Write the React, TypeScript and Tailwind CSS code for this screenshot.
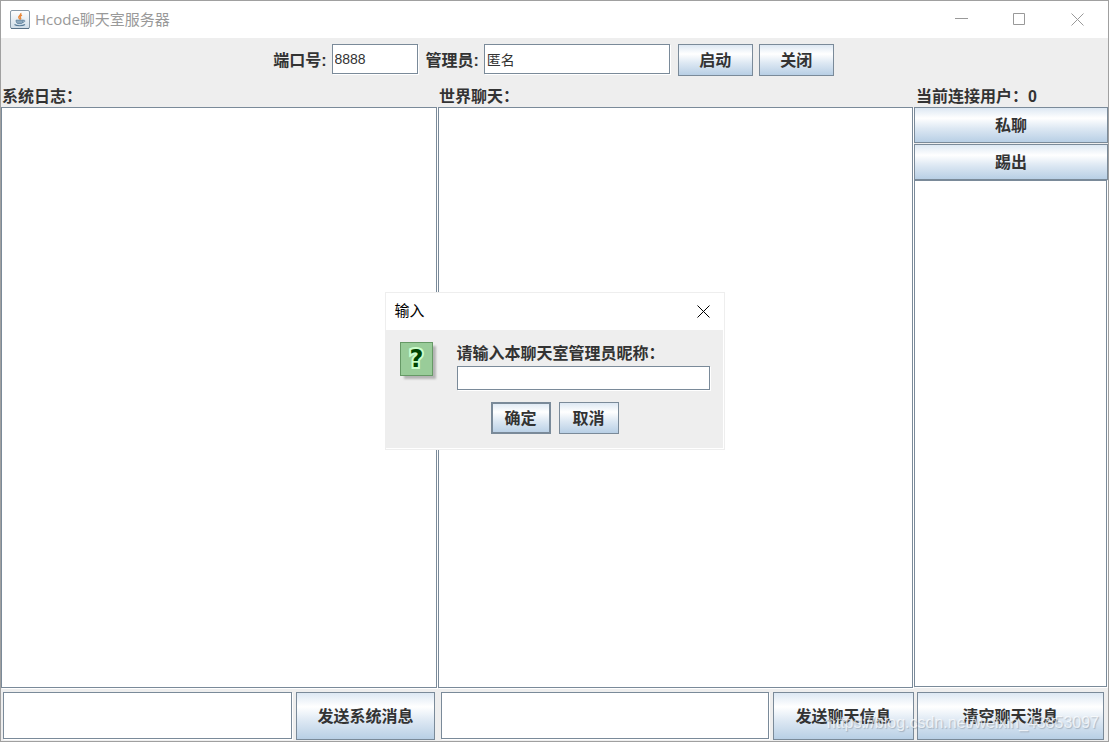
import { useState } from "react"
import type { ButtonHTMLAttributes, InputHTMLAttributes } from "react"
import { clsx } from "clsx"

const fieldStyles =
  "border border-[#7a8a99] bg-white px-0.5 text-sm text-[#333] shadow-[1px_1px_0_#fff] outline-none"

const MetalButton = ({ className, type = "button", ...props }: ButtonHTMLAttributes<HTMLButtonElement>) => (
  <button
    type={type}
    className={clsx(
      "border border-[#7a8a99] bg-[linear-gradient(to_bottom,#dde8f3_0%,#ffffff_30%,#dde8f3_60%,#b8cfe5_100%)] pt-0.5 font-bold whitespace-nowrap",
      className
    )}
    {...props}
  />
)

const MetalInput = ({ className, ...props }: InputHTMLAttributes<HTMLInputElement>) => (
  <input className={clsx(fieldStyles, className)} {...props} />
)

const JavaIcon = () => (
  <svg viewBox="0 0 20 20" className="size-5" aria-hidden="true">
    <defs>
      <linearGradient id="java-bg" x1="0" y1="0" x2="0" y2="1">
        <stop offset="0" stopColor="#ffffff" />
        <stop offset="1" stopColor="#cfdde8" />
      </linearGradient>
    </defs>
    <rect x="0.5" y="0.5" width="19" height="18" rx="1.5" fill="url(#java-bg)" stroke="#8799a8" />
    <path d="M1 18.5h18" stroke="#587187" strokeWidth="1" />
    <path
      d="M10.8 3c1 2-3.2 2.9-2 4.8.4.7 1 1 .9 1.7M12 5.2c-2 1-2.2 1.8-1.4 2.7.4.6.1 1.2-.5 1.6"
      fill="none"
      stroke="#e8883a"
      strokeWidth="1.3"
    />
    <path d="M6 10.2h7.2c-.1 2-.8 3.2-1.6 3.4H7.8C6.7 13.2 6.1 12 6 10.2z" fill="#8da8bd" stroke="#587c98" strokeWidth="0.8" />
    <path d="M13.2 10.3c2.4-.5 2.3 1.9-.8 2.1" fill="none" stroke="#587c98" strokeWidth="0.9" />
    <path d="M4.5 14.6c2 1.5 8.3 1.5 10.5 0" fill="none" stroke="#587c98" strokeWidth="1.2" />
  </svg>
)

const QuestionIcon = () => (
  <svg viewBox="0 0 40 40" className="size-10" aria-hidden="true">
    <defs>
      <filter id="soft" x="-20%" y="-20%" width="140%" height="140%">
        <feGaussianBlur stdDeviation="1.2" />
      </filter>
    </defs>
    <rect x="4" y="4" width="32" height="33" fill="#b4b4b4" filter="url(#soft)" />
    <rect x="0.5" y="0.5" width="32" height="33" fill="#99cc99" stroke="#669966" />
    <text
      x="16.5"
      y="25"
      textAnchor="middle"
      fill="#004400"
      stroke="#ccffcc"
      strokeWidth="4"
      paintOrder="stroke"
      className="font-['DejaVu_Sans',sans-serif] text-[24px] font-bold"
    >
      ?
    </text>
  </svg>
)

const CloseIcon = () => (
  <svg viewBox="0 0 13 13" className="size-[13px]" stroke="currentColor" fill="none" aria-hidden="true">
    <path d="M0.5 0.5l12 12M12.5 0.5l-12 12" />
  </svg>
)

const TitleBar = () => (
  <header className="flex h-[37px] shrink-0 items-stretch justify-between bg-white text-[#999]">
    <div className="flex items-center gap-[5px] pl-[9px]">
      <JavaIcon />
      <h1 className="font-['Open_Sans','Noto_Sans_CJK_SC',sans-serif] text-[15px]">Hcode聊天室服务器</h1>
    </div>
    <div className="flex pr-0.5">
      <button type="button" aria-label="最小化" className="flex w-[58px] items-center justify-center">
        <svg viewBox="0 0 13 13" className="size-[13px]" stroke="currentColor" aria-hidden="true">
          <path d="M0 5.5h13" />
        </svg>
      </button>
      <button type="button" aria-label="最大化" className="flex w-[58px] items-center justify-center">
        <svg viewBox="0 0 13 13" className="size-[13px]" stroke="currentColor" fill="none" aria-hidden="true">
          <path d="M0.5 0.5h11v11h-11z" />
        </svg>
      </button>
      <button type="button" aria-label="关闭窗口" className="flex w-[58px] items-center justify-center">
        <CloseIcon />
      </button>
    </div>
  </header>
)

const NicknameDialog = ({ onClose }: { onClose: () => void }) => {
  const [nickname, setNickname] = useState("")

  return (
    <div className="fixed inset-0 flex items-center justify-center">
      <div
        role="dialog"
        aria-labelledby="dialog-title"
        className="w-[340px] border border-[#eee] bg-white pr-px pb-px"
      >
        <div className="flex h-[37px] items-center justify-between pr-[13px] pl-[9px] text-black">
          <h2 id="dialog-title" className="text-[15px]">
            输入
          </h2>
          <button type="button" aria-label="关闭对话框" onClick={onClose}>
            <CloseIcon />
          </button>
        </div>
        <form
          className="bg-[#eee] pt-3 pr-[13px] pb-3.5 pl-3.5"
          onSubmit={(e) => {
            e.preventDefault()
            onClose()
          }}
        >
          <div className="flex gap-[17px]">
            <QuestionIcon />
            <div className="flex flex-1 flex-col gap-0.5">
              <label htmlFor="nickname" className="pt-0.5 leading-5 font-bold">
                请输入本聊天室管理员昵称：
              </label>
              <MetalInput
                id="nickname"
                className="h-6 w-full"
                value={nickname}
                onChange={(e) => setNickname(e.target.value)}
              />
            </div>
          </div>
          <div className="mt-3 flex justify-center gap-2">
            <MetalButton type="submit" className="h-8 w-[60px] shadow-[inset_0_0_0_1px_#7a8a99]">
              确定
            </MetalButton>
            <MetalButton className="h-8 w-[60px]" onClick={onClose}>
              取消
            </MetalButton>
          </div>
        </form>
      </div>
    </div>
  )
}

const App = () => {
  const [port, setPort] = useState("8888")
  const [admin, setAdmin] = useState("匿名")
  const [isDialogOpen, setIsDialogOpen] = useState(true)

  return (
    <div className="flex min-h-screen flex-col border border-[#a0a0a0] bg-[#eee] font-['Liberation_Sans','Noto_Sans_CJK_SC',sans-serif] text-base text-[#333]">
      <TitleBar />

      <div className="flex items-start justify-center pt-1.5 pr-0.5 pb-2.5">
        <label htmlFor="port" className="mr-[5px] pt-px leading-8 font-bold">
          端口号:
        </label>
        <MetalInput
          id="port"
          className="mr-2 h-[30px] w-[86px]"
          value={port}
          onChange={(e) => setPort(e.target.value)}
        />
        <label htmlFor="admin" className="mr-[5px] pt-px leading-8 font-bold">
          管理员:
        </label>
        <MetalInput
          id="admin"
          className="mr-2 h-[30px] w-[186px]"
          value={admin}
          onChange={(e) => setAdmin(e.target.value)}
        />
        <MetalButton className="mr-1.5 h-8 w-[75px]">启动</MetalButton>
        <MetalButton className="h-8 w-[75px]">关闭</MetalButton>
      </div>

      <main className="grid flex-1 grid-cols-[437fr_476fr_194fr]">
        <section className="flex flex-col pr-px pb-px">
          <label htmlFor="system-log" className="pl-px leading-5 font-bold">
            系统日志：
          </label>
          <textarea id="system-log" readOnly className={clsx(fieldStyles, "w-full flex-1 resize-none")} />
        </section>
        <section className="flex flex-col pr-px pb-px">
          <label htmlFor="world-chat" className="pl-px leading-5 font-bold">
            世界聊天：
          </label>
          <textarea id="world-chat" readOnly className={clsx(fieldStyles, "w-full flex-1 resize-none")} />
        </section>
        <section className="flex flex-col pb-0.5">
          <h2 className="pl-0.5 leading-5 font-bold">当前连接用户：0</h2>
          <MetalButton className="mb-px h-9">私聊</MetalButton>
          <MetalButton className="h-9">踢出</MetalButton>
          <ul aria-label="当前连接用户" className={clsx(fieldStyles, "mr-px flex-1")} />
        </section>
      </main>

      <footer className="grid grid-cols-[437fr_476fr_194fr] pt-[3px] pb-px">
        <form className="flex gap-1 pr-[3px] pl-0.5" onSubmit={(e) => e.preventDefault()}>
          <MetalInput aria-label="系统消息" className="h-[47px] min-w-0 flex-1" />
          <MetalButton type="submit" className="h-12 w-[139px]">
            发送系统消息
          </MetalButton>
        </form>
        <form className="flex gap-1 pl-[3px]" onSubmit={(e) => e.preventDefault()}>
          <MetalInput aria-label="聊天信息" className="h-[47px] min-w-0 flex-1" />
          <MetalButton type="submit" className="h-12 w-[141px]">
            发送聊天信息
          </MetalButton>
        </form>
        <div className="pr-1 pl-[3px]">
          <MetalButton className="h-12 w-full">清空聊天消息</MetalButton>
        </div>
      </footer>

      <p className="pointer-events-none absolute right-2.5 bottom-[7px] text-base text-white/70 [text-shadow:1px_1px_1px_rgba(110,120,130,0.4)]">
        https://blog.csdn.net/weixin_43853097
      </p>

      {isDialogOpen && <NicknameDialog onClose={() => setIsDialogOpen(false)} />}
    </div>
  )
}

export default App
